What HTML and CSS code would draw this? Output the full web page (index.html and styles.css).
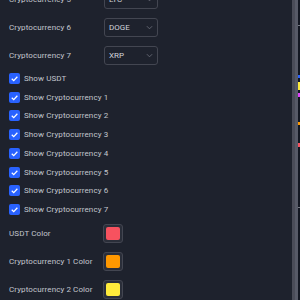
FILE: index.html
```
<!DOCTYPE html>
<html lang="en">

<head>
  <meta charset="utf-8">
  <meta name="viewport" content="width=device-width, initial-scale=1">
  <title>Indicator settings</title>
  <link rel="stylesheet" href="styles.css">
</head>

<body>
  <div class="screen">
    <!-- Settings panel (scrolled) -->
    <div class="panel">
      <div class="list">
        <div class="row">
          <span class="label">Cryptocurrency 5</span>
          <div class="select"><span>LTC</span><svg class="chev" viewBox="0 0 8 5"><path d="M1 1l3 3 3-3"/></svg></div>
        </div>
        <div class="row">
          <span class="label">Cryptocurrency 6</span>
          <div class="select"><span>DOGE</span><svg class="chev" viewBox="0 0 8 5"><path d="M1 1l3 3 3-3"/></svg></div>
        </div>
        <div class="row">
          <span class="label">Cryptocurrency 7</span>
          <div class="select"><span>XRP</span><svg class="chev" viewBox="0 0 8 5"><path d="M1 1l3 3 3-3"/></svg></div>
        </div>

        <label class="check"><span class="box"><svg viewBox="0 0 10 10"><path d="M2.5 5.2l1.8 1.8 3.3-3.6"/></svg></span>Show USDT</label>
        <label class="check"><span class="box"><svg viewBox="0 0 10 10"><path d="M2.5 5.2l1.8 1.8 3.3-3.6"/></svg></span>Show Cryptocurrency 1</label>
        <label class="check"><span class="box"><svg viewBox="0 0 10 10"><path d="M2.5 5.2l1.8 1.8 3.3-3.6"/></svg></span>Show Cryptocurrency 2</label>
        <label class="check"><span class="box"><svg viewBox="0 0 10 10"><path d="M2.5 5.2l1.8 1.8 3.3-3.6"/></svg></span>Show Cryptocurrency 3</label>
        <label class="check"><span class="box"><svg viewBox="0 0 10 10"><path d="M2.5 5.2l1.8 1.8 3.3-3.6"/></svg></span>Show Cryptocurrency 4</label>
        <label class="check"><span class="box"><svg viewBox="0 0 10 10"><path d="M2.5 5.2l1.8 1.8 3.3-3.6"/></svg></span>Show Cryptocurrency 5</label>
        <label class="check"><span class="box"><svg viewBox="0 0 10 10"><path d="M2.5 5.2l1.8 1.8 3.3-3.6"/></svg></span>Show Cryptocurrency 6</label>
        <label class="check"><span class="box"><svg viewBox="0 0 10 10"><path d="M2.5 5.2l1.8 1.8 3.3-3.6"/></svg></span>Show Cryptocurrency 7</label>

        <div class="row">
          <span class="label">USDT Color</span>
          <div class="swatch"><span class="fill red"></span></div>
        </div>
        <div class="row">
          <span class="label">Cryptocurrency 1 Color</span>
          <div class="swatch"><span class="fill orange"></span></div>
        </div>
        <div class="row">
          <span class="label">Cryptocurrency 2 Color</span>
          <div class="swatch"><span class="fill yellow"></span></div>
        </div>
      </div>
    </div>

    <!-- Scrollbar -->
    <div class="scrollbar"><div class="thumb"></div></div>

    <!-- Chart peeking through on the right -->
    <svg class="chart" viewBox="0 0 2 300" preserveAspectRatio="none">
      <rect x="0" y="25" width="2" height="1" fill="#787b86"/>
      <rect x="0" y="75" width="2" height="3" fill="#2962ff"/>
      <rect x="0" y="82" width="2" height="8" fill="#ffeb3b"/>
      <rect x="0" y="93" width="2" height="4" fill="#e040fb"/>
      <rect x="0" y="122" width="2" height="3" fill="#ff9800"/>
      <rect x="0" y="143" width="2" height="4" fill="#f7525f"/>
      <rect x="0" y="207" width="2" height="1" fill="#787b86"/>
    </svg>
  </div>
</body>

</html>
```

FILE: styles.css
```
/* Dark settings panel */
body {
  margin: 0;
  background-color: #1e222d;
  font-family: Roboto, "Liberation Sans", sans-serif;
  color: #c3c6ce;
}

.screen {
  display: flex;
  width: 300px;
  height: 300px;
  overflow: hidden;
}

.panel {
  width: 292px;
  flex: none;
  overflow: hidden;
}

.list {
  margin-top: -15px;
  padding-left: 9px;
}

.row {
  display: flex;
  align-items: center;
  height: 28px;
}

.label {
  width: 95px;
  font-size: 8px;
  letter-spacing: 0.1px;
  white-space: nowrap;
}

.select {
  display: flex;
  align-items: center;
  justify-content: space-between;
  box-sizing: border-box;
  width: 54px;
  height: 19px;
  padding: 0 4px 0 4px;
  border: 1px solid #434651;
  border-radius: 3px;
  font-size: 8px;
  color: #d1d4dc;
}

.chev {
  width: 7px;
  height: 5px;
  fill: none;
  stroke: #6a6d78;
  stroke-width: 1;
}

.check {
  display: flex;
  align-items: center;
  height: 18.75px;
  font-size: 8px;
  letter-spacing: 0.1px;
}

.box {
  display: flex;
  width: 11px;
  height: 11px;
  margin-right: 4px;
  border-radius: 2px;
  background-color: #2962ff;
}

.box svg {
  width: 11px;
  height: 11px;
  fill: none;
  stroke: #ffffff;
  stroke-width: 1.1;
}

.swatch {
  display: flex;
  align-items: center;
  justify-content: center;
  box-sizing: border-box;
  width: 20px;
  height: 19px;
  margin-left: -1px;
  border: 1px solid #434651;
  border-radius: 3px;
  background-color: #2a2e39;
}

.fill {
  width: 14px;
  height: 13px;
  border-radius: 2px;
}

.red {
  background-color: #f7525f;
}

.orange {
  background-color: #ff9800;
}

.yellow {
  background-color: #ffeb3b;
}

.scrollbar {
  display: flex;
  width: 6px;
  flex: none;
  background-color: #4a4c58;
}

.thumb {
  width: 3px;
  margin-left: 3px;
  background-color: #575a67;
}

.chart {
  width: 2px;
  height: 300px;
  flex: none;
  background-color: #131722;
}
```
